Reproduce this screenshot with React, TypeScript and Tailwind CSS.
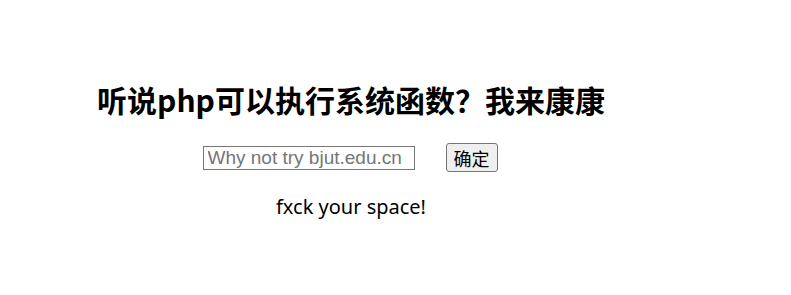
export default function App() {
  return (
    <div className="w-[791px] h-[295px] bg-white font-['Noto_Sans','Noto_Sans_CJK_SC',sans-serif] text-black">
      <div className="w-[702px] flex flex-col items-center pt-[76px]">
        <h1 className="text-[30px] font-bold leading-[46px] font-['Noto_Sans_CJK_SC',sans-serif]">
          听说php可以执行系统函数？我来康康
        </h1>
        <form className="mt-[21px] flex items-center gap-[31px] -translate-x-[1px]">
          <input
            type="text"
            placeholder="Why not try bjut.edu.cn"
            className="w-[212px] h-[24px] border border-[#767676] px-[4px] py-0 text-[19px] leading-[22px] font-['Liberation_Sans',sans-serif] placeholder:text-[#757575] outline-none"
          />
          <button
            type="button"
            className="w-[52px] h-[29px] bg-[#efefef] border border-[#767676] rounded-[3px] text-[18px] leading-[24px] font-['Noto_Sans_CJK_SC',sans-serif]"
          >
            确定
          </button>
        </form>
        <p className="mt-[21px] text-[20px] leading-[28px]">fxck your space!</p>
      </div>
    </div>
  );
}
